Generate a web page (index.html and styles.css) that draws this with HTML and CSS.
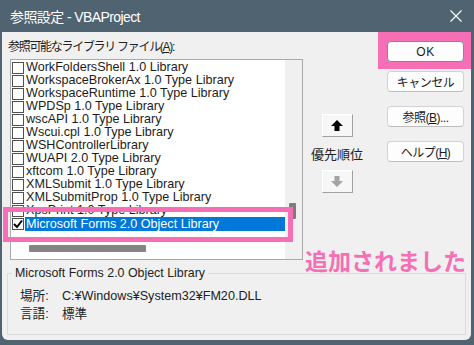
FILE: index.html
```html
<!DOCTYPE html>
<html lang="ja">
<head>
<meta charset="utf-8">
<title>参照設定 - VBAProject</title>
<link rel="stylesheet" href="styles.css">
</head>
<body>
<div class="window">
  <div class="titlebar">
    <span class="title">参照設定 - VBAProject</span>
    <svg class="close" width="12" height="12" viewBox="0 0 12 12"><path d="M0.5 0.5 L11.5 11.5 M11.5 0.5 L0.5 11.5" stroke="#fff" stroke-width="1.2" fill="none"/></svg>
  </div>
  <div class="dialog">
    <div class="main">
      <div class="left">
        <div class="label">参照可能なライブラリ ファイル(<u>A</u>):</div>
        <div class="listbox">
          <div class="listarea">
            <ul class="items">
              <li class="row"><span class="cb"></span><span class="name">WorkFoldersShell 1.0 Library</span></li>
              <li class="row"><span class="cb"></span><span class="name">WorkspaceBrokerAx 1.0 Type Library</span></li>
              <li class="row"><span class="cb"></span><span class="name">WorkspaceRuntime 1.0 Type Library</span></li>
              <li class="row"><span class="cb"></span><span class="name">WPDSp 1.0 Type Library</span></li>
              <li class="row"><span class="cb"></span><span class="name">wscAPI 1.0 Type Library</span></li>
              <li class="row"><span class="cb"></span><span class="name">Wscui.cpl 1.0 Type Library</span></li>
              <li class="row"><span class="cb"></span><span class="name">WSHControllerLibrary</span></li>
              <li class="row"><span class="cb"></span><span class="name">WUAPI 2.0 Type Library</span></li>
              <li class="row"><span class="cb"></span><span class="name">xftcom 1.0 Type Library</span></li>
              <li class="row"><span class="cb"></span><span class="name">XMLSubmit 1.0 Type Library</span></li>
              <li class="row"><span class="cb"></span><span class="name">XMLSubmitProp 1.0 Type Library</span></li>
              <li class="row"><span class="cb"></span><span class="name">XpsPrint 1.0 Type Library</span></li>
              <li class="row"><span class="cb checked"><svg width="10" height="10" viewBox="0 0 10 10"><path d="M1 5 L4 8 L9 1.5" stroke="#000" stroke-width="2" fill="none"/></svg></span><span class="name selected">Microsoft Forms 2.0 Object Library</span></li>
            </ul>
            <div class="hscroll"><div class="hthumb"></div></div>
          </div>
          <div class="vscroll"><div class="vthumb"></div></div>
        </div>
      </div>
      <div class="priority">
        <button class="move"><svg width="12" height="11" viewBox="0 0 12 11"><path d="M6 0 L12 6 H8.5 V11 H3.5 V6 H0 Z" fill="#000"/></svg></button>
        <span class="prio-label">優先順位</span>
        <button class="move down"><svg width="12" height="11" viewBox="0 0 12 11"><path d="M6 11 L12 5 H8.5 V0 H3.5 V5 H0 Z" fill="#a3a3a3"/></svg></button>
      </div>
      <div class="buttons">
        <button class="btn ok">OK</button>
        <button class="btn cancel">キャンセル</button>
        <button class="btn browse">参照(<u>B</u>)...</button>
        <button class="btn help">ヘルプ(<u>H</u>)</button>
      </div>
    </div>
    <fieldset class="info">
      <legend>Microsoft Forms 2.0 Object Library</legend>
      <div class="info-row first"><span class="key">場所:</span><span>C:¥Windows¥System32¥FM20.DLL</span></div>
      <div class="info-row"><span class="key">言語:</span><span>標準</span></div>
    </fieldset>
  </div>
  <div class="mark-ok"></div>
  <div class="mark-list"></div>
  <div class="added">追加されました</div>
</div>
</body>
</html>
```

FILE: styles.css
```css
* { box-sizing: border-box; }
html, body { margin: 0; padding: 0; }
body {
  width: 474px;
  height: 345px;
  overflow: hidden;
  background: #4f6370;
  font-family: "Liberation Sans", "Noto Sans CJK JP", sans-serif;
  color: #1a1a1a;
}
.window {
  position: relative;
  width: 474px;
  height: 345px;
  background: #4f6370;
  display: flex;
  flex-direction: column;
}
.titlebar {
  height: 32px;
  flex: none;
  display: flex;
  align-items: center;
  justify-content: space-between;
  padding: 0 12px 0 10px;
  color: #fff;
}
.title { font-size: 14px; letter-spacing: -0.6px; }
.dialog {
  height: 308px;
  margin: 0 3px 0 2px;
  background: #f0f0f0;
  border-radius: 0 0 6px 6px;
  padding: 6px 0 0 6px;
  display: flex;
  flex-direction: column;
}
.main { display: flex; align-items: flex-start; }
.left { width: 295px; flex: none; }
.label {
  height: 18px;
  line-height: 18px;
  font-size: 12px;
  letter-spacing: -1.3px;
  margin-bottom: 3px;
  white-space: nowrap;
  color: #222;
}
.listbox {
  margin-left: 2px;
  width: 293px;
  height: 201px;
  border: 1px solid #a9a9a9;
  background: #fff;
  display: flex;
}
.listarea { flex: 1; display: flex; flex-direction: column; min-width: 0; }
.items {
  list-style: none;
  margin: 0;
  padding: 1px 0 0 1px;
  flex: 1;
  overflow: hidden;
}
.row {
  height: 13px;
  display: flex;
  align-items: center;
  font-size: 12.6px;
  line-height: 13px;
  white-space: nowrap;
  color: #1c1c1c;
}
.cb {
  width: 12px;
  height: 12px;
  border: 1px solid #505050;
  background: #fff;
  flex: none;
  margin-right: 1px;
  display: flex;
  align-items: center;
  justify-content: center;
}
.name { flex: 1; padding-left: 1px; height: 13px; }
.name.selected { background: #0078d7; color: #fff; height: 14px; line-height: 14px; }
.hscroll { height: 17px; padding: 3px 0 0 18px; flex: none; }
.hthumb { width: 117px; height: 7px; background: #858585; border-radius: 1px; }
.vscroll { width: 17px; flex: none; background: #f0f0f0; }
.vthumb { margin: 143px 0 0 4px; width: 7px; height: 16px; background: #7d7d7d; border-radius: 1px; }
.priority {
  width: 68px;
  flex: none;
  display: flex;
  flex-direction: column;
  align-items: center;
  padding-top: 76px;
}
.move {
  width: 31px;
  height: 23px;
  padding: 0;
  background: #f7f7f7;
  border: 1px solid;
  border-color: #ffffff #a0a0a0 #a0a0a0 #ffffff;
  display: flex;
  align-items: center;
  justify-content: center;
}
.prio-label {
  margin-top: 8px;
  font-size: 13px;
  line-height: 18px;
  font-family: "Noto Sans CJK JP", sans-serif;
  color: #222;
}
.move.down { margin-top: 7px; }
.buttons {
  position: relative;
  z-index: 1;
  margin-left: 16px;
  width: 77px;
  flex: none;
}
.btn {
  display: block;
  width: 77px;
  height: 21px;
  padding: 0;
  background: #fdfdfd;
  border: 1px solid #d3d3d3;
  border-bottom-color: #bdbdbd;
  border-radius: 4px;
  font-family: "Liberation Sans", "Noto Sans CJK JP", sans-serif;
  font-size: 12px;
  letter-spacing: -0.5px;
  color: #1b1b1b;
}
.btn.ok { margin-top: 3px; border-color: #6f8fae; letter-spacing: 0.5px; }
.btn.cancel { margin-top: 9px; }
.btn.browse { margin-top: 14px; }
.btn.help { margin-top: 14px; }
.info {
  margin: 5px 0 0 -1px;
  width: 459px;
  height: 70px;
  border: 1px solid #dcdcdc;
  padding: 0 0 0 4px;
}
.info legend {
  padding: 0 3px;
  font-size: 12.4px;
  line-height: 16px;
  color: #222;
}
.info-row {
  display: flex;
  font-size: 12.6px;
  line-height: 18px;
  margin-left: 8px;
  white-space: nowrap;
  color: #222;
}
.info-row.first { margin-top: 6px; }
.key { width: 42px; flex: none; }
.mark-ok {
  position: absolute;
  z-index: 0;
  left: 378px;
  top: 32px;
  width: 93px;
  height: 37px;
  background: #f66fb5;
}
.mark-list {
  position: absolute;
  z-index: 2;
  left: 3px;
  top: 207px;
  width: 290px;
  height: 35px;
  border: 5px solid #f66fb5;
}
.added {
  position: absolute;
  z-index: 2;
  left: 305px;
  top: 246px;
  font-family: "Noto Sans CJK JP", sans-serif;
  font-size: 23px;
  font-weight: 700;
  line-height: 28px;
  color: #f66fb5;
  white-space: nowrap;
}
```
